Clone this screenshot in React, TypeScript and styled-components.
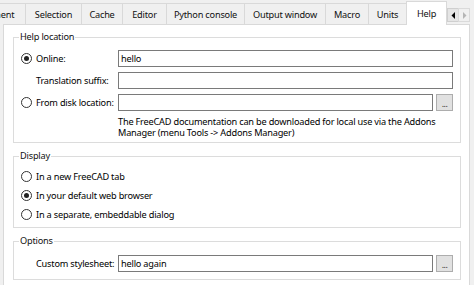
import React from 'react';
import styled, { createGlobalStyle } from 'styled-components';

const Global = createGlobalStyle`
  html, body { margin: 0; padding: 0; background: #f0f0f0; }
  body {
    width: 474px; height: 285px; overflow: hidden;
    font-family: "Noto Sans", "Open Sans", sans-serif;
    font-size: 9.2px; letter-spacing: -0.2px; color: #000;
  }
`;

const Window = styled.div`
  width: 474px; height: 285px;
  display: flex; flex-direction: column;
  overflow: hidden;
`;

const TabStrip = styled.div`
  display: flex; align-items: flex-end;
  height: 24px; flex: 0 0 24px;
  position: relative; z-index: 2;
`;

const TabViewport = styled.div`
  flex: 0 0 447px; height: 25px; margin-bottom: -1px;
  overflow: hidden; display: flex; align-items: flex-end;
`;

const TabRow = styled.div<{ $offset: number }>`
  display: flex; align-items: flex-end;
  margin-left: ${p => -p.$offset}px;
`;

const Tab = styled.div<{ $w: number; $active?: boolean }>`
  box-sizing: border-box;
  flex: 0 0 ${p => p.$w}px;
  height: ${p => (p.$active ? 24 : 21)}px;
  margin-bottom: ${p => (p.$active ? 0 : 1)}px;
  margin-left: ${p => (p.$active ? -1 : 0)}px;
  background: ${p => (p.$active ? '#ffffff' : '#f0f0f0')};
  border-top: 1px solid #d9d9d9;
  border-right: 1px solid #d9d9d9;
  border-left: ${p => (p.$active ? '1px solid #d9d9d9' : 'none')};
  display: flex; align-items: center; justify-content: center;
  padding-top: ${p => (p.$active ? 0 : 1)}px;
  white-space: nowrap; color: #111;
`;

const ScrollButtons = styled.div`
  display: flex; margin-bottom: 2px;
`;

const ScrollBtn = styled.div<{ $disabled?: boolean }>`
  box-sizing: border-box;
  width: 12px; height: 14px;
  background: ${p => (p.$disabled ? '#f0f0f0' : '#e5e5e5')};
  border: 1px solid ${p => (p.$disabled ? '#dadada' : '#cfcfcf')};
  margin-left: ${p => (p.$disabled ? -1 : 0)}px;
  display: flex; align-items: center; justify-content: center;
`;

const Panel = styled.div`
  flex: 1;
  margin: 0 4px 0 3px;
  background: #ffffff;
  border: 1px solid #d9d9d9;
  border-bottom: none;
  padding: 6px 8px 0 9px;
  display: flex; flex-direction: column; gap: 7px;
  position: relative; z-index: 1;
`;

const Group = styled.fieldset<{ $pt: number; $pb: number }>`
  margin: 0; min-width: 0;
  border: 1px solid #dcdcdc;
  padding: ${p => p.$pt}px 7px ${p => p.$pb}px 7px;
`;

const Legend = styled.legend`
  padding: 0 1px; margin-left: -2px;
  line-height: 12px; color: #111;
`;

const FormGrid = styled.div`
  display: grid;
  grid-template-columns: 94px 1fr 17px;
  column-gap: 3px; row-gap: 5px;
  align-items: center;
`;

const RadioRow = styled.label`
  display: flex; align-items: center; gap: 4px;
  height: 15px; white-space: nowrap;
`;

const RadioCircle = styled.span<{ $checked?: boolean }>`
  box-sizing: border-box;
  width: 11px; height: 11px; flex: 0 0 11px;
  border-radius: 50%;
  border: 1px solid #333;
  background: #fff;
  display: flex; align-items: center; justify-content: center;
  &::after {
    content: '';
    width: 5px; height: 5px; border-radius: 50%;
    background: ${p => (p.$checked ? '#222' : 'transparent')};
  }
`;

const FieldLabel = styled.span`
  padding-left: 15px; white-space: nowrap;
`;

const Input = styled.div<{ $span?: boolean }>`
  box-sizing: border-box;
  height: 17px;
  grid-column: ${p => (p.$span ? '2 / 4' : '2 / 3')};
  border: 1px solid #7a7a7a;
  background: #fff;
  padding: 0 2px;
  display: flex; align-items: center;
  white-space: nowrap;
`;

const DotsButton = styled.div`
  box-sizing: border-box;
  height: 17px;
  background: #e1e1e1;
  border: 1px solid #adadad;
  display: flex; align-items: flex-end; justify-content: center;
  font-size: 9px; line-height: 12px; letter-spacing: -0.5px;
  color: #333;
`;

const Description = styled.div`
  grid-column: 2 / 4;
  line-height: 11px;
  white-space: nowrap;
`;

const RadioList = styled.div`
  display: flex; flex-direction: column; gap: 4px;
`;

const tabs = [
  { label: 'Document', w: 66 },
  { label: 'Selection', w: 56 },
  { label: 'Cache', w: 41 },
  { label: 'Editor', w: 44 },
  { label: 'Python console', w: 78 },
  { label: 'Output window', w: 81 },
  { label: 'Macro', w: 43 },
  { label: 'Units', w: 38 },
  { label: 'Help', w: 41, active: true },
];

const Arrow = ({ dir, color }: { dir: 'left' | 'right'; color: string }) => (
  <svg width="5" height="7" viewBox="0 0 5 7">
    {dir === 'left' ? (
      <polygon points="4,0 4,7 0.5,3.5" fill={color} />
    ) : (
      <polygon points="1,0 1,7 4.5,3.5" fill={color} />
    )}
  </svg>
);

export default function App() {
  return (
    <>
      <Global />
      <Window>
        <TabStrip>
          <TabViewport>
            <TabRow $offset={40}>
              {tabs.map(t => (
                <Tab key={t.label} $w={t.w} $active={t.active}>
                  {t.label}
                </Tab>
              ))}
            </TabRow>
          </TabViewport>
          <ScrollButtons>
            <ScrollBtn>
              <Arrow dir="left" color="#000" />
            </ScrollBtn>
            <ScrollBtn $disabled>
              <Arrow dir="right" color="#b5b5b5" />
            </ScrollBtn>
          </ScrollButtons>
        </TabStrip>
        <Panel>
          <Group $pt={7} $pb={4}>
            <Legend>Help location</Legend>
            <FormGrid>
              <RadioRow>
                <RadioCircle $checked />
                Online:
              </RadioRow>
              <Input $span>hello</Input>
              <FieldLabel>Translation suffix:</FieldLabel>
              <Input $span />
              <RadioRow>
                <RadioCircle />
                From disk location:
              </RadioRow>
              <Input />
              <DotsButton>...</DotsButton>
              <Description>
                The FreeCAD documentation can be downloaded for local use via the Addons
                <br />
                Manager (menu Tools -&gt; Addons Manager)
              </Description>
            </FormGrid>
          </Group>
          <Group $pt={7} $pb={5}>
            <Legend>Display</Legend>
            <RadioList>
              <RadioRow>
                <RadioCircle />
                In a new FreeCAD tab
              </RadioRow>
              <RadioRow>
                <RadioCircle $checked />
                In your default web browser
              </RadioRow>
              <RadioRow>
                <RadioCircle />
                In a separate, embeddable dialog
              </RadioRow>
            </RadioList>
          </Group>
          <Group $pt={8} $pb={7}>
            <Legend>Options</Legend>
            <FormGrid>
              <FieldLabel>Custom stylesheet:</FieldLabel>
              <Input>hello again</Input>
              <DotsButton>...</DotsButton>
            </FormGrid>
          </Group>
        </Panel>
      </Window>
    </>
  );
}
